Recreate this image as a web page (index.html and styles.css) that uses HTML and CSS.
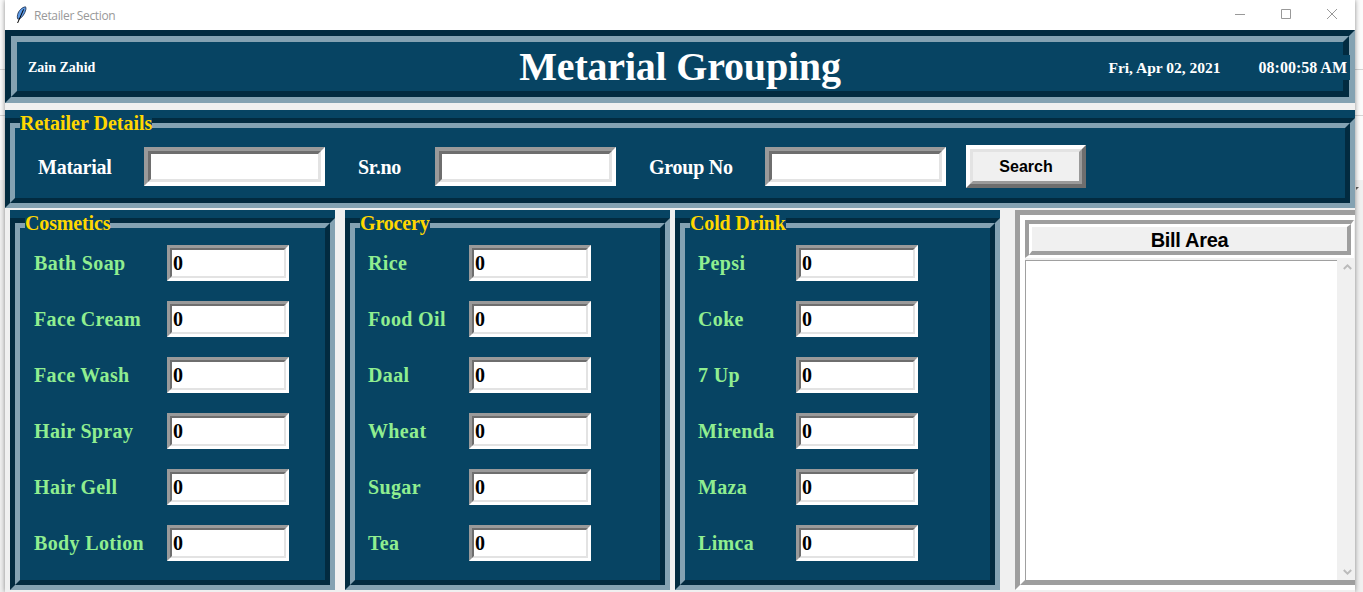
FILE: index.html
```html
<!DOCTYPE html>
<html lang="en">

<head>
    <meta charset="UTF-8">
    <meta name="viewport" content="width=device-width, initial-scale=1.0">
    <title>Retailer Section</title>
    <link rel="stylesheet" href="styles.css">
</head>

<body>
    <span class="desk-mark"></span>
    <div class="window">
        <div class="titlebar">
            <svg class="app-icon" width="12" height="18" viewBox="0 0 12 18">
                <path d="M10.5 .8C7 1.3 3.6 4.5 2.6 8.6 2.2 10.2 2.2 11.6 2.6 12.8L4 13.2C7.2 11.6 10 7.5 10.9 3.4 11.1 2.4 11 1.4 10.5 .8Z" fill="#5c9ae6" stroke="#1b2a44" stroke-width=".8" />
                <path d="M8.6 3.4 2.6 17" stroke="#000" stroke-width="1" fill="none" />
            </svg>
            <span class="app-title">Retailer Section</span>
            <div class="win-controls">
                <svg width="10" height="10" viewBox="0 0 10 10"><path d="M0 5.5H10" stroke="#999" fill="none" /></svg>
                <svg width="10" height="10" viewBox="0 0 10 10"><path d="M.5 .5H9.5V9.5H.5Z" stroke="#999" fill="none" /></svg>
                <svg width="10" height="10" viewBox="0 0 10 10"><path d="M0 0 10 10M10 0 0 10" stroke="#999" fill="none" /></svg>
            </div>
        </div>

        <header class="ridge-outer header">
            <div class="ridge-inner header-inner">
                <span class="user-name">Zain Zahid</span>
                <h1>Metarial Grouping</h1>
                <div class="clock">
                    <span class="clock-date">Fri, Apr 02, 2021</span>
                    <span class="clock-time">08:00:58 AM</span>
                </div>
            </div>
        </header>

        <section class="frame details">
            <span class="legend">Retailer Details</span>
            <div class="ridge-outer">
                <div class="ridge-inner details-row">
                    <label class="detail-label">Matarial</label>
                    <div class="entry"><input type="text"></div>
                    <label class="detail-label">Sr.no</label>
                    <div class="entry"><input type="text"></div>
                    <label class="detail-label">Group No</label>
                    <div class="entry"><input type="text"></div>
                    <button class="search-btn" type="button"><span>Search</span></button>
                </div>
            </div>
        </section>

        <div class="columns">
            <section class="frame card card-cosmetics">
                <span class="legend">Cosmetics</span>
                <div class="ridge-outer">
                    <div class="ridge-inner card-inner">
                        <div class="item"><label>Bath Soap</label><div class="entry"><input type="text" value="0"></div></div>
                        <div class="item"><label>Face Cream</label><div class="entry"><input type="text" value="0"></div></div>
                        <div class="item"><label>Face Wash</label><div class="entry"><input type="text" value="0"></div></div>
                        <div class="item"><label>Hair Spray</label><div class="entry"><input type="text" value="0"></div></div>
                        <div class="item"><label>Hair Gell</label><div class="entry"><input type="text" value="0"></div></div>
                        <div class="item"><label>Body Lotion</label><div class="entry"><input type="text" value="0"></div></div>
                    </div>
                </div>
            </section>

            <section class="frame card card-grocery">
                <span class="legend">Grocery</span>
                <div class="ridge-outer">
                    <div class="ridge-inner card-inner">
                        <div class="item"><label>Rice</label><div class="entry"><input type="text" value="0"></div></div>
                        <div class="item"><label>Food Oil</label><div class="entry"><input type="text" value="0"></div></div>
                        <div class="item"><label>Daal</label><div class="entry"><input type="text" value="0"></div></div>
                        <div class="item"><label>Wheat</label><div class="entry"><input type="text" value="0"></div></div>
                        <div class="item"><label>Sugar</label><div class="entry"><input type="text" value="0"></div></div>
                        <div class="item"><label>Tea</label><div class="entry"><input type="text" value="0"></div></div>
                    </div>
                </div>
            </section>

            <section class="frame card card-drinks">
                <span class="legend">Cold Drink</span>
                <div class="ridge-outer">
                    <div class="ridge-inner card-inner">
                        <div class="item"><label>Pepsi</label><div class="entry"><input type="text" value="0"></div></div>
                        <div class="item"><label>Coke</label><div class="entry"><input type="text" value="0"></div></div>
                        <div class="item"><label>7 Up</label><div class="entry"><input type="text" value="0"></div></div>
                        <div class="item"><label>Mirenda</label><div class="entry"><input type="text" value="0"></div></div>
                        <div class="item"><label>Maza</label><div class="entry"><input type="text" value="0"></div></div>
                        <div class="item"><label>Limca</label><div class="entry"><input type="text" value="0"></div></div>
                    </div>
                </div>
            </section>

            <section class="bill">
                <div class="bill-inner">
                    <div class="bill-title">
                        <div class="bill-title-inner">Bill Area</div>
                    </div>
                    <div class="bill-body">
                        <div class="bill-text"></div>
                        <div class="scrollbar">
                            <svg width="9" height="6" viewBox="0 0 9 6"><path d="M.8 5 4.5 1.4 8.2 5" stroke="#bbb" stroke-width="2" fill="none" /></svg>
                            <svg width="9" height="6" viewBox="0 0 9 6"><path d="M.8 1 4.5 4.6 8.2 1" stroke="#bbb" stroke-width="2" fill="none" /></svg>
                        </div>
                    </div>
                </div>
            </section>
        </div>
    </div>
</body>

</html>
```

FILE: styles.css
```css
/* Global Styles */
* {
    box-sizing: border-box;
}

html,
body {
    height: 100%;
}

body {
    margin: 0;
    overflow: hidden;
    font-family: "Liberation Serif", serif;
    background-color: #fbfbfb;
    background-image:
        linear-gradient(#d4d4d4, #d4d4d4),
        linear-gradient(#d4d4d4, #d4d4d4),
        linear-gradient(#f0f0f0, #f0f0f0);
    background-size: 100% 1px, 100% 1px, 100% 412px;
    background-position: 0 69px, 0 115px, 0 180px;
    background-repeat: no-repeat;
}

/* small arrow of the window behind, showing past the right edge */
.desk-mark {
    position: absolute;
    top: 187px;
    left: 1356px;
    border-top: 3px solid #555;
    border-right: 3px solid transparent;
}

.window {
    width: 1350px;
    height: 592px;
    margin-left: 5px;
    overflow: hidden;
    background-color: #f0f0f0;
    box-shadow: 0 0 5px rgba(0, 0, 0, 0.45);
}

/* Title bar */
.titlebar {
    display: flex;
    align-items: center;
    height: 30px;
    padding-left: 10px;
    background-color: #fff;
}

.app-title {
    margin-left: 7px;
    font-family: "Open Sans", sans-serif;
    font-size: 12px;
    letter-spacing: -0.35px;
    color: #999;
}

.win-controls {
    display: flex;
    gap: 36px;
    margin-left: auto;
    padding-right: 18px;
    padding-bottom: 2px;
}

/* Relief borders */
.ridge-outer {
    border-style: solid;
    border-color: #022b40 #84a2b2 #84a2b2 #022b40;
}

.ridge-inner {
    border-style: solid;
    border-color: #84a2b2 #022b40 #022b40 #84a2b2;
}

.header {
    height: 73px;
    border-width: 6px;
}

.header-inner {
    display: grid;
    grid-template-columns: 1fr auto 1fr;
    align-items: center;
    height: 100%;
    border-width: 6px;
    background-color: #074463;
}

.user-name {
    margin-top: 2px;
    padding-left: 11px;
    font-size: 14px;
    font-weight: bold;
    color: #fff;
}

h1 {
    margin: 0;
    font-size: 40px;
    letter-spacing: -0.2px;
    line-height: 49px;
    color: #fff;
}

.clock {
    display: flex;
    justify-content: flex-end;
    align-items: center;
    gap: 38px;
    margin-top: 2px;
    margin-right: -7px;
    font-size: 16px;
    font-weight: bold;
    color: #fff;
}

.clock-date {
    font-size: 15.5px;
}

.clock-time {
    display: flex;
    align-items: center;
    height: 25px;
    padding-right: 3px;
    background-color: #074463;
}

/* Labelled frames */
.frame {
    position: relative;
    padding-top: 8px;
    background-color: #074463;
}

.frame .ridge-outer {
    height: 100%;
    border-width: 5px;
}

.frame .ridge-inner {
    height: 100%;
    border-width: 5px;
}

.legend {
    position: absolute;
    top: 4px;
    left: 15px;
    height: 18px;
    font-size: 20px;
    font-weight: bold;
    line-height: 18px;
    color: #ffd700;
    background-color: #074463;
}

.card .legend {
    letter-spacing: -0.15px;
}

/* Retailer details */
.details {
    height: 98px;
    margin-top: 7px;
}

.details-row {
    display: grid;
    grid-template-columns: 129px 181px 110px 181px 149px 181px 140px;
    align-items: start;
    padding-top: 19px;
}

.details-row .entry {
    height: 39px;
}

.detail-label {
    padding-left: 33px;
    font-size: 20px;
    font-weight: bold;
    letter-spacing: -0.25px;
    line-height: 41px;
    color: #fff;
}

.detail-label:first-child {
    padding-left: 23px;
}

.search-btn {
    width: 120px;
    height: 43px;
    margin: -2px 0 0 20px;
    padding: 0;
    border-style: solid;
    border-width: 4px;
    border-color: #fff #6e6e6e #6e6e6e #fff;
    font-family: "Liberation Sans", sans-serif;
    font-size: 16px;
    font-weight: bold;
    color: #000;
    background-color: #f0f0f0;
}

.search-btn span {
    display: block;
    height: 100%;
    border-style: solid;
    border-width: 3px;
    border-color: #e3e3e3 #9a9a9a #9a9a9a #e3e3e3;
    line-height: 29px;
}

/* Entry boxes */
.entry {
    width: 100%;
    height: 36px;
    border-style: solid;
    border-width: 4px;
    border-color: #9a9a9a #fff #fff #9a9a9a;
}

.entry input {
    display: block;
    width: 100%;
    height: 100%;
    padding: 0;
    border-style: solid;
    border-width: 3px;
    border-color: #6e6e6e #e3e3e3 #e3e3e3 #6e6e6e;
    border-radius: 0;
    outline: none;
    font-family: "Liberation Serif", serif;
    font-size: 20px;
    font-weight: bold;
    color: #000;
    background-color: #fff;
}

/* Item columns */
.columns {
    display: grid;
    grid-template-columns: 335px 330px 340px 1fr;
    height: 384px;
    padding: 2px 0 0 5px;
    background-color: #f0f0f0;
}

.card {
    width: 325px;
    height: 380px;
}

.card-inner {
    display: flex;
    flex-direction: column;
    gap: 20px;
    padding: 17px 0 0 13px;
}

.card-cosmetics .card-inner {
    padding-left: 14px;
}

.item {
    display: flex;
    align-items: center;
    height: 36px;
}

.item label {
    flex: none;
    width: 101px;
    font-size: 20px;
    font-weight: bold;
    letter-spacing: 0.35px;
    color: #90ee90;
}

.card-cosmetics .item label {
    width: 133px;
}

.card-drinks .item label {
    width: 98px;
}

.item .entry {
    width: 122px;
    border-width: 3px;
}

.item .entry input {
    padding-left: 1px;
    border-width: 2px;
}

/* Bill area */
.bill {
    width: 360px;
    height: 380px;
    border-style: solid;
    border-width: 5px;
    border-color: #9e9e9e #fff #fff #9e9e9e;
}

.bill-inner {
    height: 100%;
    border-style: solid;
    border-width: 5px;
    border-color: #fff #9e9e9e #9e9e9e #fff;
}

.bill-title {
    width: 329px;
    height: 38px;
    border-style: solid;
    border-width: 4px 3px 3px 4px;
    border-color: #9e9e9e #fff #fff #9e9e9e;
}

.bill-title-inner {
    height: 100%;
    border-style: solid;
    border-width: 3px 4px 4px 3px;
    border-color: #fff #9e9e9e #9e9e9e #fff;
    font-family: "Liberation Sans", sans-serif;
    font-size: 20px;
    font-weight: bold;
    letter-spacing: -0.3px;
    line-height: 26px;
    text-align: center;
    color: #000;
}

.bill-body {
    display: flex;
    height: 320px;
    margin-top: 2px;
}

.bill-text {
    flex: none;
    width: 312px;
    border-top: 1px solid #a0a0a0;
    border-left: 1px solid #a0a0a0;
    background-color: #fff;
}

.scrollbar {
    display: flex;
    flex: none;
    flex-direction: column;
    justify-content: space-between;
    align-items: center;
    width: 16px;
    margin-left: 2px;
    padding: 4px 0 5px;
    background-color: #f0f0f0;
}
```
